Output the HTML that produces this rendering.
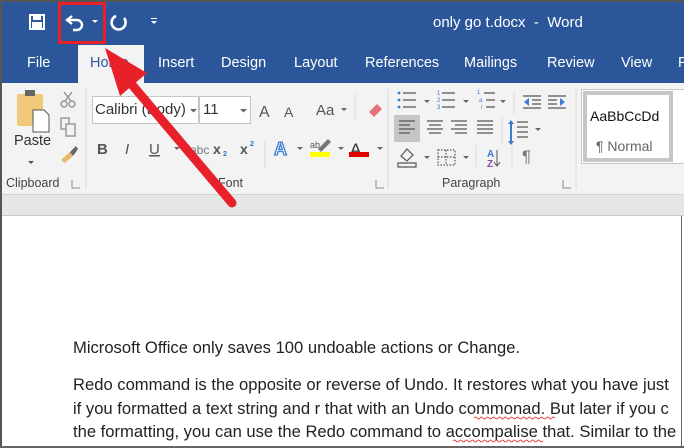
<!DOCTYPE html>
<html><head><meta charset="utf-8"><style>
*{margin:0;padding:0;box-sizing:border-box}
body{width:684px;height:448px;overflow:hidden;background:#fff;font-family:"Liberation Sans",sans-serif;position:relative}
.a{position:absolute;white-space:nowrap}
.t{color:#fff;font-size:14.5px;top:55px}
.l{color:#444;font-size:12.5px;top:176px}
.doc{font-size:16.6px;color:#222;left:73px}
</style></head><body>
<div class="a" style="left:0;top:0;width:684px;height:83px;background:#2b579a"></div>
<div class="a" style="left:78px;top:45px;width:66px;height:38px;background:#f3f3f3"></div>
<div class="a" style="left:0;top:83px;width:684px;height:111px;background:#f3f3f3"></div>
<div class="a" style="left:0;top:194px;width:684px;height:22px;background:#e6e6e6;border-top:1px solid #d4d4d4;border-bottom:1px solid #c8c8c8"></div>
<div class="a" style="left:0;top:0;width:2px;height:448px;background:#555"></div>
<div class="a" style="left:0;top:0;width:684px;height:2px;background:#555"></div>

<div class="a" style="left:433px;top:14px;color:#fff;font-size:15px">only go t.docx &nbsp;- &nbsp;Word</div>
<div class="a t" style="left:27px">File</div>
<div class="a t" style="left:90px;color:#2b579a">Home</div>
<div class="a t" style="left:158px">Insert</div>
<div class="a t" style="left:221px">Design</div>
<div class="a t" style="left:294px">Layout</div>
<div class="a t" style="left:365px">References</div>
<div class="a t" style="left:464px">Mailings</div>
<div class="a t" style="left:547px">Review</div>
<div class="a t" style="left:621px">View</div>
<div class="a t" style="left:678px">F</div>

<div class="a" style="left:92px;top:96px;width:107px;height:28px;background:#fff;border:1px solid #c6c6c6"></div>
<div class="a" style="left:199px;top:96px;width:52px;height:28px;background:#fff;border:1px solid #c6c6c6"></div>
<div class="a" style="left:95px;top:101px;font-size:15px;color:#333">Calibri (Body)</div>
<div class="a" style="left:203px;top:101px;font-size:15px;color:#333">11</div>
<div class="a" style="left:14px;top:133px;font-size:14.5px;color:#333">Paste</div>
<div class="a l" style="left:6px">Clipboard</div>
<div class="a l" style="left:218px">Font</div>
<div class="a l" style="left:442px">Paragraph</div>

<div class="a" style="left:581px;top:89px;width:110px;height:75px;border:1px solid #c6c6c6;background:#fff"></div>
<div class="a" style="left:583px;top:91px;width:90px;height:71px;border:4px solid #c6c6c6;background:#fff"></div>
<div class="a" style="left:590px;top:108px;font-size:14px;color:#111">AaBbCcDd</div>
<div class="a" style="left:596px;top:138px;font-size:14px;color:#666">¶ Normal</div>

<div class="a" style="left:394px;top:115px;width:26px;height:27px;background:#c6c6c6"></div>

<div class="a doc" style="top:338px">Microsoft Office only saves 100 undoable actions or Change.</div>
<div class="a doc" style="top:375px">Redo command is the opposite or reverse of Undo. It restores what you have just</div>
<div class="a doc" style="top:399px">if you formatted a text string and r that with an Undo commonad. But later if you c</div>
<div class="a doc" style="top:422px">the formatting, you can use the Redo command to accompalise that. Similar to the</div>
<div class="a" style="left:681px;top:216px;width:3px;height:232px;background:#666"></div>
<div class="a" style="left:681px;top:216px;width:3px;height:232px;background:#fff;left:682px;width:2px"></div>
<div class="a" style="left:0;top:446px;width:684px;height:2px;background:#666"></div>

<svg class="a" style="left:0;top:0" width="684" height="448" viewBox="0 0 684 448">
<g fill="none" stroke="#fff" stroke-width="2">
<rect x="30" y="15" width="14" height="14"/><rect x="34" y="15" width="6" height="4" fill="#fff"/><rect x="33" y="23" width="8" height="6" fill="#fff"/>
<path d="M68 20 H77 A5 5 0 0 1 77 30 H73" stroke-width="2.4"/><path d="M72 16 L67 20 L72 24" stroke-width="2.4"/>
<path d="M124 18 A7 7 0 1 1 116 16" stroke-width="2.6"/>
</g>
<g fill="#fff"><path d="M92 20h6l-3 3z"/><path d="M151 21h6l-3 3z"/><rect x="151" y="18" width="6" height="1"/></g>
<rect x="59.5" y="3.5" width="45" height="39" fill="none" stroke="#e8202a" stroke-width="3"/>
<rect x="17" y="94" width="26" height="32" rx="2" fill="#f0c879"/><rect x="25" y="90" width="10" height="6" fill="#666"/>
<path d="M33 110h11l5 5v17h-16z" fill="#fff" stroke="#555"/>
<path d="M28 161h6l-3 3z" fill="#555"/>
<g stroke="#999" fill="none" stroke-width="1.5"><circle cx="64" cy="104" r="3"/><circle cx="72" cy="104" r="3"/><path d="M65 101 L72 92 M71 101 L64 92"/>
<rect x="61" y="118" width="8" height="11"/><rect x="66" y="124" width="9" height="12" fill="#f3f3f3"/></g>
<path d="M61 160 L70 152 L73 156 L65 163z" fill="#e8b870"/><path d="M70 152 L76 146 L78 149 L73 156z" fill="#666"/>
<path d="M72 180v8h8M376 180v8h8M563 180v8h8" stroke="#888" fill="none"/>
<g stroke="#dadada"><path d="M86 89v100M388 89v100M576 89v100M355 94v26M265 140v28M514 92v22M502 117v26M476 145v22M512 145v22"/></g>
<g fill="#666"><path d="M190 109h7l-3.5 3.5z"/><path d="M240 109h7l-3.5 3.5z"/><path d="M341 108h6l-3 3z"/><path d="M174 147h6l-3 3z"/><path d="M297 147h6l-3 3z"/><path d="M338 147h6l-3 3z"/><path d="M377 147h6l-3 3z"/>
<path d="M424 100h6l-3 3z"/><path d="M463 100h6l-3 3z"/><path d="M500 100h6l-3 3z"/><path d="M535 128h6l-3 3z"/><path d="M424 156h6l-3 3z"/><path d="M463 156h6l-3 3z"/></g>
<g font-family="Liberation Sans,sans-serif" fill="#555" font-weight="bold">
<text x="259" y="117" font-size="16" font-weight="normal">A</text><text x="284" y="117" font-size="14" font-weight="normal">A</text>
<text x="316" y="115" font-size="15" font-weight="normal">Aa</text>
<text x="97" y="154" font-size="15">B</text><text x="125" y="154" font-size="15" font-style="italic" font-weight="normal">I</text>
<text x="149" y="154" font-size="15" font-weight="normal" text-decoration="underline">U</text>
<text x="190" y="154" font-size="12" font-weight="normal" fill="#777">abc</text>
<text x="213" y="154" font-size="14">x</text><text x="223" y="156" font-size="7" fill="#2b70c0">2</text>
<text x="240" y="154" font-size="14">x</text><text x="250" y="146" font-size="7" fill="#2b70c0">2</text>
<text x="274" y="155" font-size="18" fill="#fff" stroke="#3b7bd0" stroke-width="1.3">A</text>
<text x="310" y="148" font-size="9" font-weight="normal">ab</text>
<text x="350" y="155" font-size="17" font-weight="normal" fill="#333">A</text>
<text x="522" y="162" font-size="17" font-weight="normal" fill="#777">¶</text>
<text x="487" y="157" font-size="10" fill="#3b7bd0">A</text><text x="487" y="167" font-size="10" fill="#8a4db0">Z</text>
</g>
<rect x="310" y="152" width="20" height="5" fill="#ffff00"/><rect x="349" y="152" width="20" height="5" fill="#e00000"/>
<path d="M318 149 L328 139 L331 142 L321 152z" fill="#777"/>
<path d="M369 112 L377 104 L382 109 L374 117z" fill="#e8707a"/>
<path d="M497 150 v15 M494 162 l3 4 3-4" stroke="#555" fill="none"/>
<g stroke="#555" stroke-width="1.2" fill="none">
<path d="M403 93h13M403 100h13M403 107h13M442 93h13M442 100h13M442 107h13M484 93h11M486 100h9M486 107h9"/>
<path d="M523 96h18M532 100h9M532 104h9M523 108h18M548 96h18M548 100h9M548 104h9M548 108h18"/>
<path d="M399 121h16M399 125h11M399 129h16M399 133h11M427 121h16M429 125h12M427 129h16M429 133h12M451 121h16M455 125h12M451 129h16M455 133h12M477 121h16M477 125h16M477 129h16M477 133h16"/>
<path d="M517 122h11M517 127h11M517 132h11M517 137h11"/>
<path d="M438 150h17v15h-17zM446 150v15M438 157h17" stroke-dasharray="1.5 1.5"/>
<path d="M398 163h18v4h-18z"/><path d="M401 156 l6-7 6 6 -6 6z"/>
</g>
<g fill="#3b7bd0"><circle cx="399" cy="93" r="1.4"/><circle cx="399" cy="100" r="1.4"/><circle cx="399" cy="107" r="1.4"/>
<path d="M524 102l5-4v8z"/><path d="M565 102l-5-4v8z"/><path d="M511 120l-3 4h6zM511 145l-3-4h6z"/><rect x="510" y="123" width="2" height="19"/></g>
<g font-family="Liberation Sans,sans-serif" font-size="6" fill="#3b7bd0"><text x="437" y="95">1</text><text x="437" y="102">2</text><text x="437" y="109">3</text><text x="477" y="94">1</text><text x="479" y="102">a</text><text x="481" y="109">i</text></g>
<path d="M232 203 L128 80" stroke="#e8202a" stroke-width="9" stroke-linecap="round"/>
<path d="M105 48 L120 96 L147 73 Z" fill="#e8202a"/>
<path d="M474 418 q1.5 -2 3 0 t3 0 t3 0 t3 0 t3 0 t3 0 t3 0 t3 0 t3 0 t3 0 t3 0 t3 0 t3 0 t3 0 t3 0 t3 0 t3 0 t3 0 t3 0 t3 0 t3 0 t3 0 t3 0 t3 0 t3 0 t3 0 t3 0" stroke="#e02020" fill="none" stroke-width="0.8"/>
<path d="M453 441 q1.5 -2 3 0 t3 0 t3 0 t3 0 t3 0 t3 0 t3 0 t3 0 t3 0 t3 0 t3 0 t3 0 t3 0 t3 0 t3 0 t3 0 t3 0 t3 0 t3 0 t3 0 t3 0 t3 0 t3 0 t3 0 t3 0 t3 0 t3 0 t3 0 t3 0 t3 0" stroke="#e02020" fill="none" stroke-width="0.8"/>
</svg>
</body></html>
